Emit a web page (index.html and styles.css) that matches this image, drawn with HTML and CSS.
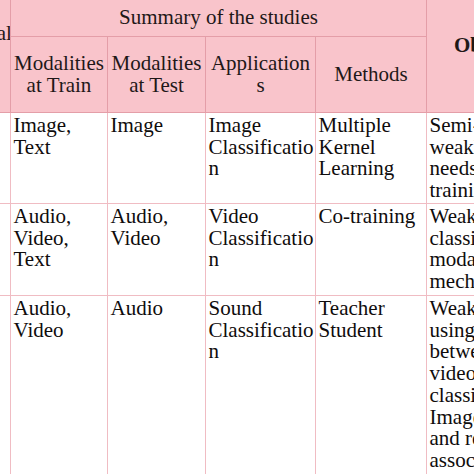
FILE: index.html
```html
<!DOCTYPE html>
<html lang="en">
<head>
<meta charset="utf-8">
<title>Summary of the studies</title>
<link rel="stylesheet" href="styles.css">
</head>
<body>
<div class="frame">
  <div class="sheet">
    <div class="cell head lead">Journal</div>
    <div class="cell head summary">Summary of the studies</div>
    <div class="cell head objective">Objectives</div>

    <div class="cell head sub">Modalities<br>at Train</div>
    <div class="cell head sub">Modalities<br>at Test</div>
    <div class="cell head sub">Application<br>s</div>
    <div class="cell head sub">Methods</div>

    <div class="cell body"></div>
    <div class="cell body">Image,<br>Text</div>
    <div class="cell body">Image</div>
    <div class="cell body">Image<br>Classificatio<br>n</div>
    <div class="cell body">Multiple<br>Kernel<br>Learning</div>
    <div class="cell body last">Semi-supervised /<br>weakly supervised,<br>needs<br>training</div>

    <div class="cell body"></div>
    <div class="cell body">Audio,<br>Video,<br>Text</div>
    <div class="cell body">Audio,<br>Video</div>
    <div class="cell body">Video<br>Classificatio<br>n</div>
    <div class="cell body">Co-training</div>
    <div class="cell body last">Weakly supervised<br>classification<br>modality<br>mechanism</div>

    <div class="cell body"></div>
    <div class="cell body">Audio,<br>Video</div>
    <div class="cell body">Audio</div>
    <div class="cell body">Sound<br>Classificatio<br>n</div>
    <div class="cell body">Teacher<br>Student</div>
    <div class="cell body last">Weakly supervised<br>using<br>between<br>video<br>classification<br>ImageNet<br>and related<br>association</div>
  </div>
</div>
</body>
</html>
```
FILE: styles.css
```css
html, body {
  margin: 0;
  padding: 0;
  background: #ffffff;
}

.frame {
  width: 474px;
  height: 474px;
  overflow: hidden;
}

.sheet {
  display: grid;
  grid-template-columns: 61px 97px 98px 110px 111px 220px;
  grid-template-rows: 37px 76px 91px 92px 220px;
  margin-left: -50px;
  font-family: "Liberation Serif", "Times New Roman", serif;
  font-size: 21px;
  line-height: 21.7px;
  color: #0f0c0c;
}

.cell {
  box-sizing: border-box;
  white-space: nowrap;
  overflow: hidden;
}

.head {
  background: #f9c4cb;
  border-right: 1px solid #e49ea8;
  border-bottom: 1px solid #e49ea8;
  color: #1f1818;
}

.lead {
  grid-row: 1 / 3;
  grid-column: 1;
  text-align: right;
  padding-top: 23px;
  padding-right: 1px;
}

.summary {
  grid-row: 1;
  grid-column: 2 / 6;
  display: flex;
  align-items: center;
  justify-content: center;
}

.objective {
  grid-row: 1 / 3;
  grid-column: 6;
  border-right: none;
  font-weight: bold;
  padding-top: 34.5px;
  padding-left: 27px;
}

.sub {
  grid-row: 2;
  display: flex;
  align-items: center;
  justify-content: center;
  text-align: center;
}

.body {
  border-right: 1px solid #f0bcc3;
  border-bottom: 1px solid #f0bcc3;
  padding: 2px 2px 0 2.5px;
}

.body.last {
  border-right: none;
}
```
